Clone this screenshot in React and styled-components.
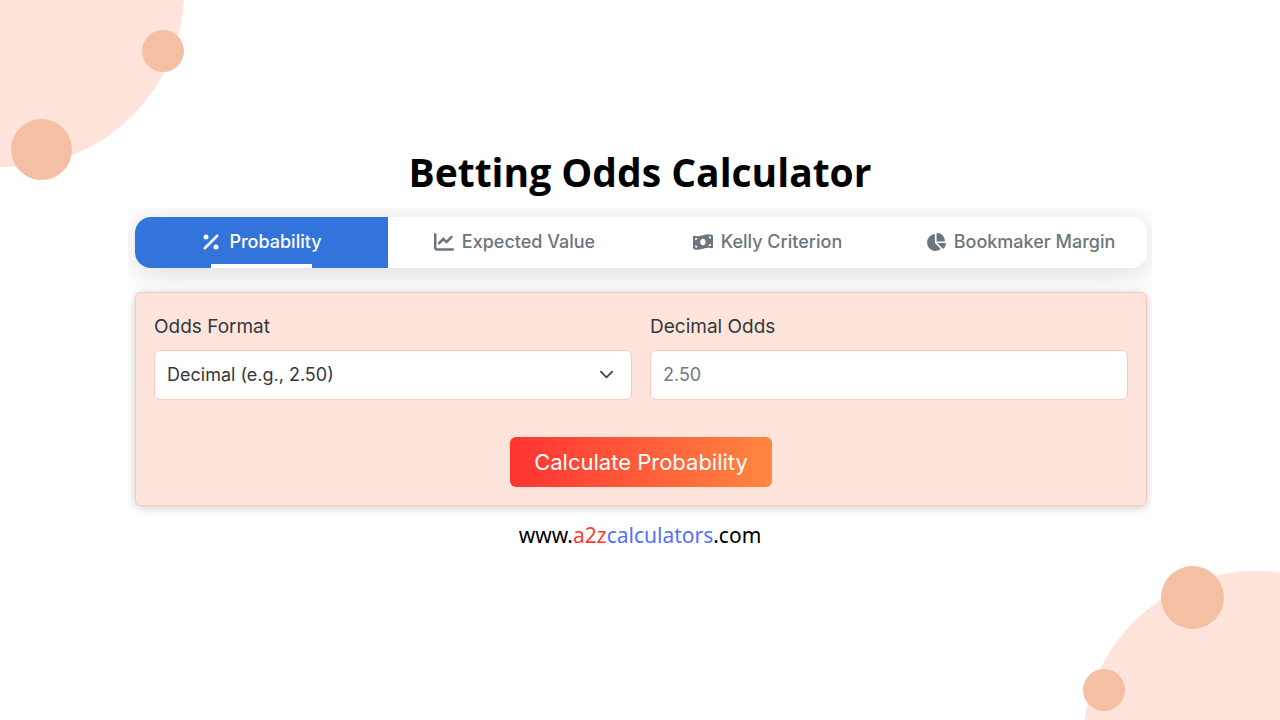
import { useState } from "react";
import styled, { createGlobalStyle } from "styled-components";
import { FaChartLine, FaChartPie, FaMoneyBillWave, FaPercent } from "react-icons/fa6";

const TABS = [
  { id: "probability", label: "Probability", Icon: FaPercent },
  { id: "value", label: "Expected Value", Icon: FaChartLine },
  { id: "kelly", label: "Kelly Criterion", Icon: FaMoneyBillWave },
  { id: "margin", label: "Bookmaker Margin", Icon: FaChartPie },
];

const App = () => {
  const [activeTab, setActiveTab] = useState("probability");
  const [format, setFormat] = useState("decimal");
  const [odds, setOdds] = useState("");

  return (
    <Page>
      <GlobalStyle />
      <TopCorner aria-hidden="true">
        <Circle $size={351} $x={-167} $y={-184} $light />
        <Circle $size={42} $x={142} $y={30} />
        <Circle $size={61} $x={11} $y={119} />
      </TopCorner>
      <BottomCorner aria-hidden="true">
        <Circle $size={346} $x={3} $y={11} $light />
        <Circle $size={63} $x={81} $y={6} />
        <Circle $size={42} $x={3} $y={109} />
      </BottomCorner>

      <Title>Betting Odds Calculator</Title>
      <Calculator>
        <TabBar role="tablist">
          {TABS.map(({ id, label, Icon }) => (
            <Tab
              key={id}
              type="button"
              role="tab"
              aria-selected={activeTab === id}
              $active={activeTab === id}
              onClick={() => setActiveTab(id)}
            >
              <Icon size={20} aria-hidden="true" />
              {label}
            </Tab>
          ))}
        </TabBar>
        <Panel onSubmit={(e) => e.preventDefault()}>
          <Fields>
            <Field>
              <Label htmlFor="format">Odds Format</Label>
              <SelectWrap>
                <Select id="format" value={format} onChange={(e) => setFormat(e.target.value)}>
                  <option value="decimal">Decimal (e.g., 2.50)</option>
                </Select>
                <Chevron viewBox="0 0 16 16" aria-hidden="true">
                  <path d="m2 5 6 6 6-6" />
                </Chevron>
              </SelectWrap>
            </Field>
            <Field>
              <Label htmlFor="odds">Decimal Odds</Label>
              <Input id="odds" placeholder="2.50" value={odds} onChange={(e) => setOdds(e.target.value)} />
            </Field>
          </Fields>
          <SubmitBtn type="submit">Calculate Probability</SubmitBtn>
        </Panel>
      </Calculator>
      <SiteLink href="#">
        www.<Red>a2z</Red>
        <Blue>calculators</Blue>.com
      </SiteLink>
    </Page>
  );
};

export default App;

const GlobalStyle = createGlobalStyle`
  * {
    box-sizing: border-box;
  }

  body {
    margin: 0;
    background-color: #fff;
    font-family: Inter, "Liberation Sans", sans-serif;
  }
`;

const Page = styled.main`
  position: relative;
  display: flex;
  flex-direction: column;
  align-items: center;
  min-height: 100vh;
  padding: 144px 0 40px;
  overflow: hidden;
`;

const TopCorner = styled.div`
  position: absolute;
  top: 0;
  left: 0;
`;

const BottomCorner = styled.div`
  position: absolute;
  right: 0;
  bottom: 0;
  width: 200px;
  height: 160px;
`;

const Circle = styled.span`
  position: absolute;
  left: ${({ $x }) => $x}px;
  top: ${({ $y }) => $y}px;
  width: ${({ $size }) => $size}px;
  height: ${({ $size }) => $size}px;
  border-radius: 50%;
  background-color: ${({ $light }) => ($light ? "#fee4da" : "#f4bfa3")};
`;

const Title = styled.h1`
  margin: 0;
  font-family: "Open Sans", "Noto Sans", sans-serif;
  font-size: 39px;
  font-weight: 700;
  line-height: 56px;
  color: #000;
`;

const Calculator = styled.section`
  position: relative;
  width: 80%;
  margin-top: 8px;
  padding: 9px 5px 12px 7px;
  overflow: hidden;
`;

const TabBar = styled.div`
  display: grid;
  grid-template-columns: repeat(4, 1fr);
  border-radius: 16px;
  overflow: hidden;
  background-color: #fff;
  box-shadow: 0 5px 32px rgba(0, 0, 0, 0.15);
`;

const Tab = styled.button`
  position: relative;
  display: flex;
  align-items: center;
  justify-content: center;
  gap: 8px;
  height: 51px;
  padding: 0 0 2px;
  border: none;
  background-color: ${({ $active }) => ($active ? "#3273dc" : "#fff")};
  color: ${({ $active }) => ($active ? "#fff" : "#6c757d")};
  font-family: inherit;
  font-size: 18px;
  font-weight: 500;
  cursor: pointer;

  &::after {
    content: "";
    display: ${({ $active }) => ($active ? "block" : "none")};
    position: absolute;
    bottom: 0;
    left: 30%;
    width: 40%;
    height: 4px;
    background-color: #fff;
  }
`;

const Panel = styled.form`
  position: relative;
  display: flex;
  flex-direction: column;
  align-items: center;
  margin-top: 24px;
  padding: 18px;
  border: 1px solid #fec7b3;
  border-radius: 6px;
  background-color: #fee4db;
  box-shadow: 0 2px 10px rgba(0, 0, 0, 0.2);
`;

const Fields = styled.div`
  display: grid;
  grid-template-columns: 1fr 1fr;
  gap: 18px;
  width: 100%;
`;

const Field = styled.div`
  display: flex;
  flex-direction: column;
  gap: 8px;
`;

const Label = styled.label`
  font-size: 19px;
  line-height: 31px;
  color: #34373b;
`;

const SelectWrap = styled.div`
  position: relative;
`;

const Input = styled.input`
  width: 100%;
  height: 50px;
  padding: 0 12px 2px;
  border: 1px solid #fec7b3;
  border-radius: 6px;
  background-color: #fff;
  color: #34373b;
  font-family: inherit;
  font-size: 18px;

  &::placeholder {
    color: #73797f;
    opacity: 1;
  }
`;

const Select = styled(Input).attrs({ as: "select" })`
  display: block;
  appearance: none;
`;

const Chevron = styled.svg`
  position: absolute;
  top: 17px;
  right: 18px;
  width: 15px;
  height: 15px;
  fill: none;
  stroke: #43484d;
  stroke-width: 2;
  stroke-linecap: round;
  stroke-linejoin: round;
  pointer-events: none;
`;

const SubmitBtn = styled.button`
  height: 50px;
  margin-top: 37px;
  padding: 0 24px;
  border: none;
  border-radius: 6px;
  background: linear-gradient(to right, #ff3333, #ff8640);
  color: #fff;
  font-family: inherit;
  font-size: 22px;
  cursor: pointer;
`;

const SiteLink = styled.a`
  position: relative;
  margin-top: 2px;
  font-family: "Noto Sans", "Open Sans", sans-serif;
  font-size: 21px;
  line-height: 30px;
  color: #000;
  text-decoration: none;
`;

const Red = styled.span`
  color: #ff3b30;
`;

const Blue = styled.span`
  color: #5271ff;
`;
